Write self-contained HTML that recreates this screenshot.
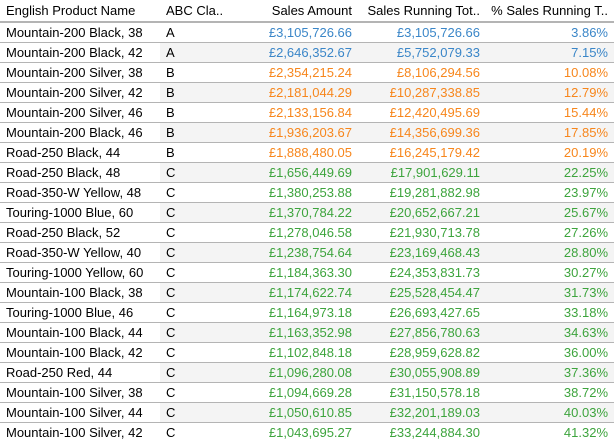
<!DOCTYPE html><html><head><style>
body{margin:0;width:614px;height:439px;overflow:hidden;background:#fff;font-family:"Liberation Sans",sans-serif;font-size:13px;color:#000}
.r{position:absolute;left:0;width:614px;height:19px;border-bottom:1px solid #b4b4b4}
.r div{position:absolute;top:2px;white-space:nowrap}
.sh{position:absolute;left:160px;right:0;top:0;bottom:0;background:#f4f4f4}
.a{left:6px}.b{left:166px}.c{right:262px;text-align:right}.d{right:134px}.e{right:6px}
.A{color:#3a86c8}.B{color:#f7861c}.C{color:#3da43d}
</style></head><body>
<div class="r" style="top:2px;height:19px;border-bottom:2px solid #b4b4b4"><div class="a" style="top:1px">English Product Name</div><div class="b" style="top:1px">ABC Cla..</div><div class="c" style="top:1px">Sales Amount</div><div class="d" style="top:1px">Sales Running Tot..</div><div class="e" style="top:1px">% Sales Running T..</div></div>
<script>
const d=[["Mountain-200 Black, 38","A","3,105,726.66","3,105,726.66","3.86%"],
["Mountain-200 Black, 42","A","2,646,352.67","5,752,079.33","7.15%"],
["Mountain-200 Silver, 38","B","2,354,215.24","8,106,294.56","10.08%"],
["Mountain-200 Silver, 42","B","2,181,044.29","10,287,338.85","12.79%"],
["Mountain-200 Silver, 46","B","2,133,156.84","12,420,495.69","15.44%"],
["Mountain-200 Black, 46","B","1,936,203.67","14,356,699.36","17.85%"],
["Road-250 Black, 44","B","1,888,480.05","16,245,179.42","20.19%"],
["Road-250 Black, 48","C","1,656,449.69","17,901,629.11","22.25%"],
["Road-350-W Yellow, 48","C","1,380,253.88","19,281,882.98","23.97%"],
["Touring-1000 Blue, 60","C","1,370,784.22","20,652,667.21","25.67%"],
["Road-250 Black, 52","C","1,278,046.58","21,930,713.78","27.26%"],
["Road-350-W Yellow, 40","C","1,238,754.64","23,169,468.43","28.80%"],
["Touring-1000 Yellow, 60","C","1,184,363.30","24,353,831.73","30.27%"],
["Mountain-100 Black, 38","C","1,174,622.74","25,528,454.47","31.73%"],
["Touring-1000 Blue, 46","C","1,164,973.18","26,693,427.65","33.18%"],
["Mountain-100 Black, 44","C","1,163,352.98","27,856,780.63","34.63%"],
["Mountain-100 Black, 42","C","1,102,848.18","28,959,628.82","36.00%"],
["Road-250 Red, 44","C","1,096,280.08","30,055,908.89","37.36%"],
["Mountain-100 Silver, 38","C","1,094,669.28","31,150,578.18","38.72%"],
["Mountain-100 Silver, 44","C","1,050,610.85","32,201,189.03","40.03%"],
["Mountain-100 Silver, 42","C","1,043,695.27","33,244,884.30","41.32%"]];
let h="";d.forEach((r,i)=>{h+=`<div class="r" style="top:${23+i*20}px${i==20?';border-bottom:0':''}">${i%2?'<span class="sh"></span>':''}<div class="a">${r[0]}</div><div class="b">${r[1]}</div><div class="c ${r[1]}">£${r[2]}</div><div class="d ${r[1]}">£${r[3]}</div><div class="e ${r[1]}">${r[4]}</div></div>`});
document.write(h);
</script>
</body></html>
